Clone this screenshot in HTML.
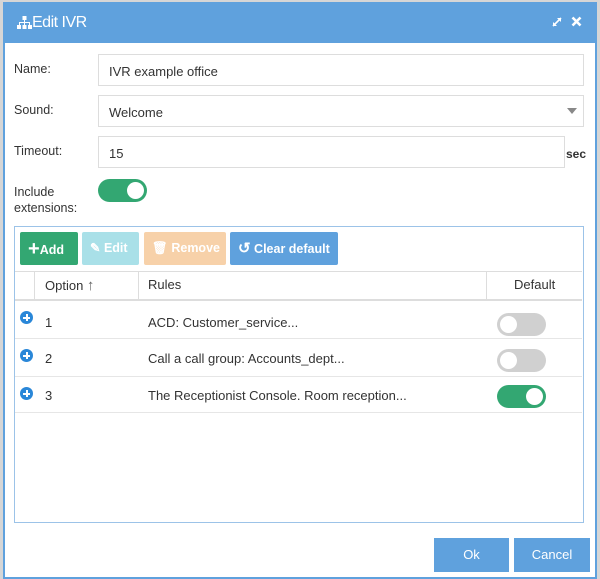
<!DOCTYPE html>
<html><head><style>
*{box-sizing:border-box;margin:0;padding:0}
body{width:600px;height:579px;background:#d6d6d6;font-family:"Liberation Sans",sans-serif;position:relative;overflow:hidden;color:#333}
.dlg{position:absolute;left:3px;top:2px;width:594px;height:577px;background:#fff;border:2px solid #5fa1dd;border-top:none}
.hdr{position:absolute;left:3px;top:2px;width:594px;height:41px;background:#5fa1dd;color:#fff;font-size:16px}
.a{position:absolute}
.lbl{font-size:12.5px;color:#333}
.inp{position:absolute;left:98px;border:1px solid #ddd;height:32px;font-size:13px;padding:9px 10px;background:#fff}
.tg{position:absolute;width:49px;height:23px;border-radius:12px}
.tg i{position:absolute;top:3px;width:17px;height:17px;border-radius:50%;background:#fff}
.btn{position:absolute;top:232px;height:33px;border-radius:2px;color:#fff;font-size:12.5px;font-weight:bold;line-height:33px}
.row{position:absolute;left:15px;width:567px;border-bottom:1px solid #e6e6e6;font-size:13px}
.plus{position:absolute;left:5px;width:13px;height:13px;border-radius:50%;background:#2a87d8}
.plus:before{content:"";position:absolute;left:3px;top:5.5px;width:7px;height:2px;background:#fff}
.plus:after{content:"";position:absolute;left:5.5px;top:3px;width:2px;height:7px;background:#fff}
</style></head><body>
<div class="dlg"></div>
<div class="hdr">
<svg class="a" style="left:14px;top:14px" width="15" height="13" viewBox="0 0 15 13" fill="#fff"><rect x="5.5" y="0" width="4" height="4"/><rect x="7" y="4" width="1" height="2.5"/><rect x="2" y="6" width="11" height="1"/><rect x="2" y="6" width="1" height="3"/><rect x="12" y="6" width="1" height="3"/><rect x="7" y="6" width="1" height="3"/><rect x="0" y="9" width="4" height="4"/><rect x="5.5" y="9" width="4" height="4"/><rect x="11" y="9" width="4" height="4"/></svg>
<div class="a" style="left:29px;top:12px;letter-spacing:-0.5px">Edit IVR</div>
<svg class="a" style="left:548px;top:14px" width="12" height="12" viewBox="0 0 12 12" stroke="#fff" stroke-width="1.6" fill="#fff"><path d="M2 10L10 2"/><path d="M6 2h4v4z" stroke="none"/><path d="M2 6v4h4z" stroke="none"/></svg>
<svg class="a" style="left:568px;top:14px" width="11" height="11" viewBox="0 0 11 11" stroke="#fff" stroke-width="2.6"><path d="M1.5 1.5l8 8M9.5 1.5l-8 8"/></svg>
</div>
<div class="a lbl" style="left:14px;top:62px">Name:</div>
<div class="inp" style="top:54px;width:486px">IVR example office</div>
<div class="a lbl" style="left:14px;top:103px">Sound:</div>
<div class="inp" style="top:95px;width:486px">Welcome</div>
<div class="a" style="left:567px;top:108px;border:5px solid transparent;border-top:6px solid #888"></div>
<div class="a lbl" style="left:14px;top:144px">Timeout:</div>
<div class="inp" style="top:136px;width:467px">15</div>
<div class="a" style="left:566px;top:147px;font-size:12px;font-weight:bold">sec</div>
<div class="a lbl" style="left:14px;top:184px;line-height:16px">Include<br>extensions:</div>
<div class="tg" style="left:98px;top:179px;background:#33a772"><i style="left:29px"></i></div>
<div class="a" style="left:14px;top:226px;width:570px;height:297px;border:1px solid #9cc3e8"></div>
<div class="btn" style="left:20px;width:58px;background:#33a772;padding-left:8px"><span style="font-size:20px;position:relative;top:1px">+</span>Add</div>
<div class="btn" style="left:82px;width:57px;background:#a9e0e8;padding-left:8px">✎ Edit</div>
<div class="btn" style="left:144px;width:82px;background:#f7d1a9;padding-left:8px">🗑 Remove</div>
<div class="btn" style="left:230px;width:108px;background:#5fa1dd;padding-left:8px"><span style="font-size:15px">↺</span> Clear default</div>
<div class="a" style="left:15px;top:271px;width:567px;height:30px;border-top:1px solid #ddd;border-bottom:2px solid #ddd;font-size:13px">
<div class="a" style="left:19px;top:0;height:28px;border-left:1px solid #ddd"></div>
<div class="a" style="left:123px;top:0;height:28px;border-left:1px solid #ddd"></div>
<div class="a" style="left:471px;top:0;height:28px;border-left:1px solid #ddd"></div>
<div class="a" style="left:30px;top:5px">Option <span style="font-size:15px;color:#666">↑</span></div>
<div class="a" style="left:133px;top:5px">Rules</div>
<div class="a" style="left:499px;top:5px">Default</div>
</div>
<div class="row" style="top:301px;height:38px"><div class="plus" style="top:10px"></div><div class="a" style="left:30px;top:14px">1</div><div class="a" style="left:133px;top:14px">ACD: Customer_service...</div><div class="tg" style="left:482px;top:12px;background:#d0d0d0"><i style="left:3px"></i></div></div>
<div class="row" style="top:339px;height:38px"><div class="plus" style="top:10px"></div><div class="a" style="left:30px;top:12px">2</div><div class="a" style="left:133px;top:12px">Call a call group: Accounts_dept...</div><div class="tg" style="left:482px;top:10px;background:#d0d0d0"><i style="left:3px"></i></div></div>
<div class="row" style="top:377px;height:36px"><div class="plus" style="top:10px"></div><div class="a" style="left:30px;top:11px">3</div><div class="a" style="left:133px;top:11px">The Receptionist Console. Room reception...</div><div class="tg" style="left:482px;top:8px;background:#33a772"><i style="left:29px"></i></div></div>
<div class="a" style="left:434px;top:538px;width:75px;height:34px;background:#5fa1dd;color:#fff;font-size:13px;text-align:center;line-height:34px">Ok</div>
<div class="a" style="left:514px;top:538px;width:76px;height:34px;background:#5fa1dd;color:#fff;font-size:13px;text-align:center;line-height:34px">Cancel</div>
</body></html>
